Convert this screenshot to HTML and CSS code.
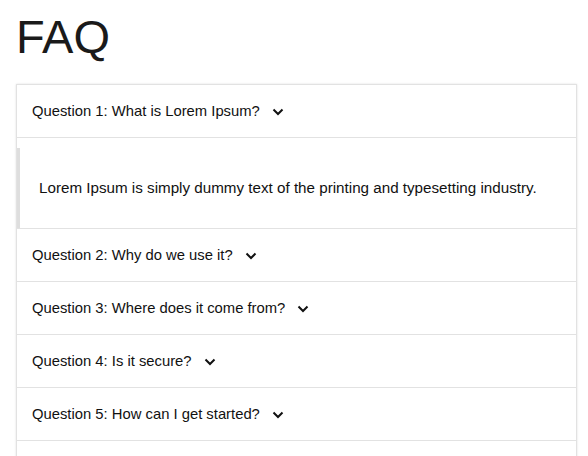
FILE: index.html
```html
<!DOCTYPE html>
<html>
<head>
<meta charset="utf-8">
<link rel="stylesheet" href="styles.css">
</head>
<body>
<h1 class="title">FAQ</h1>
<div class="faq">
  <div class="item open">
    <div class="question">Question 1: What is Lorem Ipsum? <svg class="chev" viewBox="0 0 12 8" width="12" height="8"><path d="M1.5 1.5 L6 6 L10.5 1.5" fill="none" stroke="#111" stroke-width="2"/></svg></div>
    <div class="answer"><p>Lorem Ipsum is simply dummy text of the printing and typesetting industry.</p></div>
  </div>
  <div class="item">
    <div class="question">Question 2: Why do we use it? <svg class="chev" viewBox="0 0 12 8" width="12" height="8"><path d="M1.5 1.5 L6 6 L10.5 1.5" fill="none" stroke="#111" stroke-width="2"/></svg></div>
  </div>
  <div class="item">
    <div class="question">Question 3: Where does it come from? <svg class="chev" viewBox="0 0 12 8" width="12" height="8"><path d="M1.5 1.5 L6 6 L10.5 1.5" fill="none" stroke="#111" stroke-width="2"/></svg></div>
  </div>
  <div class="item">
    <div class="question">Question 4: Is it secure? <svg class="chev" viewBox="0 0 12 8" width="12" height="8"><path d="M1.5 1.5 L6 6 L10.5 1.5" fill="none" stroke="#111" stroke-width="2"/></svg></div>
  </div>
  <div class="item">
    <div class="question">Question 5: How can I get started? <svg class="chev" viewBox="0 0 12 8" width="12" height="8"><path d="M1.5 1.5 L6 6 L10.5 1.5" fill="none" stroke="#111" stroke-width="2"/></svg></div>
  </div>
  <div class="item">
    <div class="question">Question 6: Where can I get some? <svg class="chev" viewBox="0 0 12 8" width="12" height="8"><path d="M1.5 1.5 L6 6 L10.5 1.5" fill="none" stroke="#111" stroke-width="2"/></svg></div>
  </div>
</div>
</body>
</html>
```
FILE: styles.css
```css
body {
  margin: 0;
  padding: 0 11px 0 16px;
  font-family: "Liberation Sans", Arial, sans-serif;
  color: #111;
  background: #fff;
}
.title {
  font-size: 47px;
  font-weight: 400;
  margin: 8px 0 18px 0;
  line-height: 58px;
  color: #1a1a1a;
}
.faq {
  border: 1px solid #e2e2e2;
  box-shadow: 0 0 2px rgba(0,0,0,0.12);
}
.item {
  border-bottom: 1px solid #e2e2e2;
}
.question {
  display: flex;
  align-items: center;
  gap: 12px;
  padding: 16px 15px;
  font-size: 14.8px;
  line-height: 20px;
}
.chev {
  display: block;
  margin-top: 1px;
}
.answer {
  border-top: 1px solid #e2e2e2;
  padding-top: 10px;
}
.answer p {
  margin: 0;
  border-left: 3px solid #dedede;
  padding: 30px 19px 30px 19px;
  font-size: 15.2px;
  line-height: 20px;
}
```
